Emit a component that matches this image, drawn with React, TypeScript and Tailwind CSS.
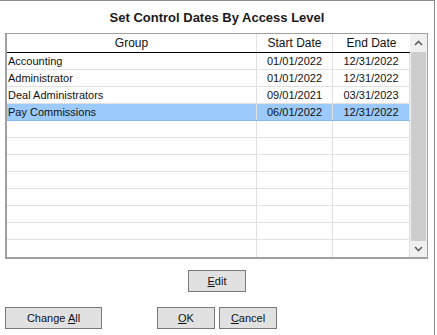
import React from "react";

interface Row {
  group: string;
  start: string;
  end: string;
  selected?: boolean;
}

const rows: Row[] = [
  { group: "Accounting", start: "01/01/2022", end: "12/31/2022" },
  { group: "Administrator", start: "01/01/2022", end: "12/31/2022" },
  { group: "Deal Administrators", start: "09/01/2021", end: "03/31/2023" },
  { group: "Pay Commissions", start: "06/01/2022", end: "12/31/2022", selected: true },
];

const EMPTY_ROWS = 8;

const Btn = ({
  className,
  children,
}: {
  className?: string;
  children: React.ReactNode;
}) => (
  <button
    type="button"
    className={`h-[22px] border border-[#7a7a7a] bg-[#e1e1e1] text-[11px] leading-none text-[#111] ${className ?? ""}`}
  >
    {children}
  </button>
);

const ControlDates = () => {
  return (
    <div
      className="flex h-[335px] w-[435px] flex-col border-t border-r border-[#8c8c8c] bg-white"
      style={{ fontFamily: '"Liberation Sans", Arial, sans-serif' }}
    >
      <div className="h-[32px] pt-[9px] text-center text-[13px] leading-[15px] font-bold text-[#1a1a1a]">
        Set Control Dates By Access Level
      </div>

      {/* grid box */}
      <div className="ml-[5px] flex h-[226px] w-[423px] border-t border-r border-b-2 border-l-2 border-[#a0a0a0]">
        <div className="flex w-[403px] flex-col">
          <div className="flex h-[19px] border-b border-black text-[12px] text-[#111]">
            <div className="flex w-[250px] items-center justify-center border-r border-[#e3e3e3]">
              Group
            </div>
            <div className="flex w-[76px] items-center justify-center border-r border-[#e3e3e3]">
              Start Date
            </div>
            <div className="flex w-[77px] items-center justify-center">End Date</div>
          </div>
          {rows.map((r) => (
            <div
              key={r.group}
              className={`flex h-[17px] border-b text-[11px] text-[#111] ${
                r.selected ? "border-[#88b8ee] bg-[#9ccbfb]" : "border-[#e0e0e0]"
              }`}
            >
              <div className="flex w-[250px] items-center border-r border-[#e0e0e0] pl-[1px]">
                {r.group}
              </div>
              <div className="flex w-[76px] items-center justify-center border-r border-[#e0e0e0]">
                {r.start}
              </div>
              <div className="flex w-[77px] items-center justify-center border-r border-[#e0e0e0]">
                {r.end}
              </div>
            </div>
          ))}
          {Array.from({ length: EMPTY_ROWS }).map((_, i) => (
            <div key={i} className="flex h-[17px] border-b border-[#e0e0e0] last:border-b-0">
              <div className="w-[250px] border-r border-[#e0e0e0]" />
              <div className="w-[76px] border-r border-[#e0e0e0]" />
              <div className="w-[77px] border-r border-[#e0e0e0]" />
            </div>
          ))}
        </div>

        {/* scrollbar */}
        <div className="flex w-[17px] flex-col bg-[#f0f0f0]">
          <div className="flex h-[18px] items-center justify-center">
            <svg width="9" height="6" viewBox="0 0 9 6">
              <path d="M1 5 L4.5 1.5 L8 5" fill="none" stroke="#606060" strokeWidth="1.6" />
            </svg>
          </div>
          <div className="mx-[1px] flex-1 bg-[#cdcdcd]" />
          <div className="flex h-[16px] items-center justify-center">
            <svg width="9" height="6" viewBox="0 0 9 6">
              <path d="M1 1 L4.5 4.5 L8 1" fill="none" stroke="#606060" strokeWidth="1.6" />
            </svg>
          </div>
        </div>
      </div>

      <div className="mt-[11px] flex justify-center">
        <Btn className="w-[58px]">
          <span className="underline">E</span>dit
        </Btn>
      </div>

      <div className="mt-[15px] flex">
        <Btn className="ml-[5px] w-[97px]">
          Change <span className="underline">A</span>ll
        </Btn>
        <Btn className="ml-[55px] w-[58px]">
          <span className="underline">O</span>K
        </Btn>
        <Btn className="ml-[4px] w-[58px]">
          <span className="underline">C</span>ancel
        </Btn>
      </div>
    </div>
  );
};

export default function App() {
  return <ControlDates />;
}
